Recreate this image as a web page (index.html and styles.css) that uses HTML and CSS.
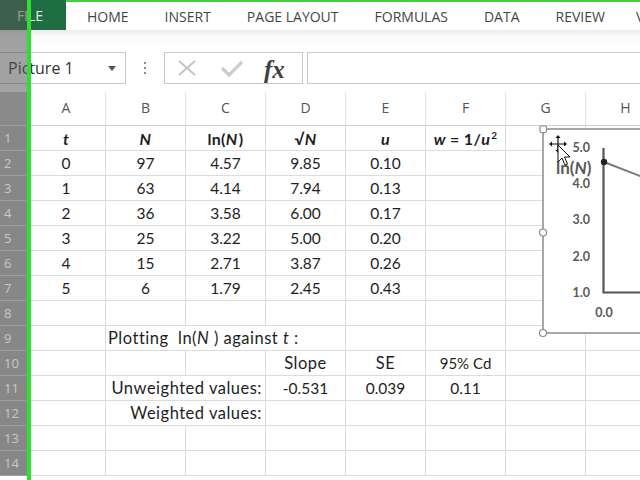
FILE: index.html
```html
<!DOCTYPE html>
<html>
<head>
<meta charset="utf-8">
<link rel="stylesheet" href="styles.css">
</head>
<body>
<div class="tabs">
  <div class="file">FILE</div>
  <div class="tablist">
    <span>HOME</span><span>INSERT</span><span>PAGE LAYOUT</span><span>FORMULAS</span><span>DATA</span><span>REVIEW</span><span class="last">VIEW</span>
  </div>
</div>
<div class="ribbon-gap"></div>
<div class="fbar">
  <div class="namebox"><span>Picture 1</span><span class="caret"></span></div>
  <div class="dots"><i></i><i></i><i></i></div>
  <div class="fbox">
    <svg class="ic-x" width="22" height="18" viewBox="0 0 22 18"><path d="M3 2 L19 16 M19 2 L3 16" stroke="#c4c4c4" stroke-width="2" fill="none"/></svg>
    <svg class="ic-ok" width="24" height="18" viewBox="0 0 24 18"><path d="M2 9 L9 16 L22 3" stroke="#cdcdcd" stroke-width="3.2" fill="none"/></svg>
    <span class="fx">fx</span>
  </div>
  <div class="finput"></div>
</div>
<div class="sheet">
  <div class="rh corner"></div>
  <div class="c hd">A</div><div class="c hd">B</div><div class="c hd">C</div><div class="c hd">D</div><div class="c hd">E</div><div class="c hd">F</div><div class="c hd">G</div><div class="c hd">H</div>

  <div class="rh">1</div>
  <div class="c b"><span><em>t</em></span></div><div class="c b"><span><em>N</em></span></div><div class="c b"><span>ln(<em>N</em>&#8202;)</span></div><div class="c b"><span>√<em>N</em></span></div><div class="c b"><span><em>u</em></span></div><div class="c b"><span><em>w</em> =&nbsp;1/<em>u</em><sup>2</sup></span></div><div class="c"></div><div class="c"></div>

  <div class="rh">2</div>
  <div class="c">0</div><div class="c">97</div><div class="c">4.57</div><div class="c">9.85</div><div class="c">0.10</div><div class="c"></div><div class="c"></div><div class="c"></div>

  <div class="rh">3</div>
  <div class="c">1</div><div class="c">63</div><div class="c">4.14</div><div class="c">7.94</div><div class="c">0.13</div><div class="c"></div><div class="c"></div><div class="c"></div>

  <div class="rh">4</div>
  <div class="c">2</div><div class="c">36</div><div class="c">3.58</div><div class="c">6.00</div><div class="c">0.17</div><div class="c"></div><div class="c"></div><div class="c"></div>

  <div class="rh">5</div>
  <div class="c">3</div><div class="c">25</div><div class="c">3.22</div><div class="c">5.00</div><div class="c">0.20</div><div class="c"></div><div class="c"></div><div class="c"></div>

  <div class="rh">6</div>
  <div class="c">4</div><div class="c">15</div><div class="c">2.71</div><div class="c">3.87</div><div class="c">0.26</div><div class="c"></div><div class="c"></div><div class="c"></div>

  <div class="rh">7</div>
  <div class="c">5</div><div class="c">6</div><div class="c">1.79</div><div class="c">2.45</div><div class="c">0.43</div><div class="c"></div><div class="c"></div><div class="c"></div>

  <div class="rh">8</div>
  <div class="c"></div><div class="c"></div><div class="c"></div><div class="c"></div><div class="c"></div><div class="c"></div><div class="c"></div><div class="c"></div>

  <div class="rh">9</div>
  <div class="c"></div><div class="c t left span3"><span>Plotting&nbsp; ln(<em>N</em>&nbsp;) against <em>t</em>&nbsp;:</span></div><div class="c"></div><div class="c"></div><div class="c"></div><div class="c"></div>

  <div class="rh">10</div>
  <div class="c"></div><div class="c"></div><div class="c"></div><div class="c t">Slope</div><div class="c t">SE</div><div class="c pct">95% Cd</div><div class="c"></div><div class="c"></div>

  <div class="rh">11</div>
  <div class="c"></div><div class="c t right span2">Unweighted values:</div><div class="c">-0.531</div><div class="c">0.039</div><div class="c">0.11</div><div class="c"></div><div class="c"></div>

  <div class="rh">12</div>
  <div class="c"></div><div class="c t right span2">Weighted values:</div><div class="c"></div><div class="c"></div><div class="c"></div><div class="c"></div><div class="c"></div>

  <div class="rh">13</div>
  <div class="c"></div><div class="c"></div><div class="c"></div><div class="c"></div><div class="c"></div><div class="c"></div><div class="c"></div><div class="c"></div>

  <div class="rh">14</div>
  <div class="c"></div><div class="c"></div><div class="c"></div><div class="c"></div><div class="c"></div><div class="c"></div><div class="c"></div><div class="c"></div>
</div>

<svg class="chart" width="104" height="222" viewBox="536 120 104 222">
  <rect x="543" y="129" width="110" height="204" fill="#fff" stroke="#8a8a8a" stroke-width="1.5"/>
  <g class="axis-labels" text-anchor="end">
    <text x="590" y="152">5.0</text>
    <text x="590" y="188">4.0</text>
    <text x="590" y="224">3.0</text>
    <text x="590" y="261">2.0</text>
    <text x="590" y="297">1.0</text>
  </g>
  <text class="axis-labels" x="604" y="317" text-anchor="middle">0.0</text>
  <path d="M603.5 148 V292.5 H645" stroke="#555" stroke-width="2.2" fill="none"/>
  <path d="M604 162 L645 178" stroke="#7a7a7a" stroke-width="2" fill="none"/>
  <circle cx="604" cy="162" r="3.2" fill="#222"/>
  <text class="ytitle" x="556" y="174">ln(<tspan font-style="italic">N</tspan>)</text>
  <rect x="540" y="126" width="6.5" height="6.5" rx="1.5" fill="#fff" stroke="#8a8a8a" stroke-width="1.2"/>
  <circle cx="543" cy="232.5" r="3.5" fill="#fff" stroke="#8a8a8a" stroke-width="1.2"/>
  <circle cx="543" cy="333" r="3.5" fill="#fff" stroke="#8a8a8a" stroke-width="1.2"/>
  <g stroke="#fff" stroke-width="3" fill="none">
    <path d="M550 144 H566 M558 136 V152"/>
  </g>
  <g stroke="#111" stroke-width="1.2" fill="none">
    <path d="M550 144 H566 M558 136 V152"/>
  </g>
  <g fill="#111">
    <path d="M549 144 L552 141.5 L552 146.5 Z"/>
    <path d="M567 144 L564 141.5 L564 146.5 Z"/>
    <path d="M558 135 L555.5 138 L560.5 138 Z"/>
    <path d="M558 153 L555.5 150 L560.5 150 Z"/>
  </g>
  <path d="M558 145 L558 162 L562 158 L565 165 L567.5 164 L564.5 157 L570 157 Z" fill="#fff" stroke="#111" stroke-width="1"/>
</svg>

<div class="dim"></div>
<div class="greenline"></div>
</body>
</html>
```

FILE: styles.css
```css
* { box-sizing: border-box; margin: 0; padding: 0; }

html, body {
  width: 640px;
  height: 480px;
  overflow: hidden;
  background: #fff;
}

body {
  position: relative;
  font-family: "Open Sans", "DejaVu Sans", sans-serif;
}

.tabs {
  height: 30px;
  display: flex;
}

.file {
  width: 66px;
  background: #1f6e43;
  color: #e8f0ea;
  font-size: 14px;
  display: flex;
  align-items: center;
  justify-content: center;
  padding-right: 6px;
}

.tablist {
  flex: 1;
  display: flex;
  align-items: center;
  gap: 36px;
  padding-left: 21px;
  border-top: 2px solid #3ad63a;
  font-size: 14px;
  color: #454545;
  white-space: nowrap;
  overflow: hidden;
}

.tablist .last { margin-left: -5px; }

.ribbon-gap {
  height: 22px;
  background: linear-gradient(#ececec, #fbfbfb 7px, #fff);
}

.fbar {
  display: flex;
  height: 32px;
}

.namebox {
  width: 127px;
  margin-left: -1px;
  border: 1px solid #c8c8c8;
  display: flex;
  align-items: center;
  justify-content: space-between;
  padding: 0 9px 0 8px;
  font-size: 16px;
  color: #333;
}

.caret {
  width: 0;
  height: 0;
  border-left: 4px solid transparent;
  border-right: 4px solid transparent;
  border-top: 5px solid #555;
}

.dots {
  width: 38px;
  display: flex;
  flex-direction: column;
  align-items: center;
  justify-content: center;
  gap: 3px;
}

.dots i {
  width: 2px;
  height: 2px;
  background: #8a8a8a;
}

.fbox {
  width: 139px;
  border: 1px solid #c8c8c8;
  display: flex;
  align-items: center;
  padding-left: 11px;
}

.ic-ok { margin-left: 22px; }

.fx {
  margin-left: 20px;
  font-family: "Liberation Serif", "DejaVu Serif", serif;
  font-style: italic;
  font-weight: bold;
  font-size: 25px;
  color: #404040;
  line-height: 1;
  margin-top: 2px;
}

.finput {
  flex: 1;
  margin-left: 4px;
  border: 1px solid #c8c8c8;
  border-right: none;
}

.sheet {
  margin-top: 8px;
  display: grid;
  grid-template-columns: 27px 79px repeat(7, 80px);
  grid-template-rows: 34px;
  grid-auto-rows: 25px;
  width: 666px;
  height: 388px;
  overflow: hidden;
  font-family: Lato, "Open Sans", sans-serif;
  font-size: 15.5px;
  color: #1e1e1e;
}

.c {
  border-right: 1px solid #dcdcdc;
  border-bottom: 1px solid #dcdcdc;
  display: flex;
  align-items: center;
  justify-content: center;
  white-space: nowrap;
  padding: 0 3px;
}

.t {
  font-size: 16.5px;
  letter-spacing: 0.5px;
}

.pct { font-size: 15px; }

.hd {
  font-family: "Open Sans", sans-serif;
  font-size: 14px;
  color: #555;
  border-right-color: #e2e2e2;
  border-bottom-color: #cfcfcf;
  padding-bottom: 2px;
}

.b {
  font-weight: bold;
  font-size: 16px;
  letter-spacing: 0.3px;
}

.c em { font-style: italic; }

.c sup {
  font-size: 10px;
  vertical-align: 6px;
  margin-left: 1px;
  line-height: 0;
}

.left { justify-content: flex-start; padding-left: 2px; }
.right { justify-content: flex-end; padding-right: 3px; }
.span2 { grid-column: span 2; }
.span3 { grid-column: span 3; }

.rh {
  background: #878787;
  color: #c8c8c8;
  font-family: "Open Sans", sans-serif;
  font-size: 13px;
  display: flex;
  align-items: center;
  padding-left: 4px;
  border-bottom: 1px solid #9d9d9d;
}

.rh.corner { background: #8a8a8a; }

.chart {
  position: absolute;
  left: 536px;
  top: 120px;
}

.axis-labels {
  font-family: Lato, sans-serif;
  font-weight: bold;
  font-size: 12.5px;
  fill: #595959;
}

.ytitle {
  font-family: Lato, sans-serif;
  font-weight: bold;
  font-size: 17px;
  fill: #595959;
}

.dim {
  position: absolute;
  left: 0;
  top: 0;
  width: 27px;
  height: 92px;
  background: rgba(85, 85, 85, 0.55);
}

.greenline {
  position: absolute;
  left: 27px;
  top: 0;
  width: 4px;
  height: 480px;
  background: #2fe02f;
}
```
